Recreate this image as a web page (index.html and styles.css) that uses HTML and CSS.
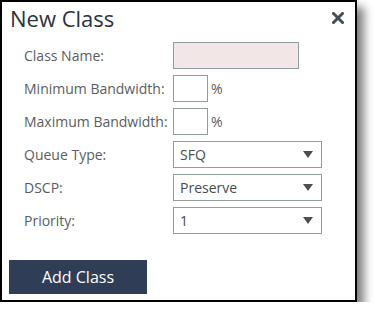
FILE: index.html
```html
<!DOCTYPE html>
<html><head>
<title>New Class</title>
<link rel="stylesheet" href="styles.css">
</head><body>
<div class="dialog">
<div class="header">
<h3>New Class</h3>
<svg class="close" width="12" height="12" viewBox="0 0 12 12"><path d="M1.5 1.5 L10.5 10.5 M10.5 1.5 L1.5 10.5" stroke="#454d57" stroke-width="3" stroke-linecap="square"/></svg>
</div>
<div class="form">
<label>Class Name:</label>
<div class="field"><input type="text" class="name"></div>
<label>Minimum Bandwidth:</label>
<div class="field"><input type="text" class="pct"><span>%</span></div>
<label>Maximum Bandwidth:</label>
<div class="field"><input type="text" class="pct"><span>%</span></div>
<label>Queue Type:</label>
<div class="field"><div class="select">SFQ<i></i></div></div>
<label>DSCP:</label>
<div class="field"><div class="select">Preserve<i></i></div></div>
<label>Priority:</label>
<div class="field"><div class="select">1<i></i></div></div>
</div>
<button>Add Class</button>
</div>
</body></html>
```

FILE: styles.css
```css
body {margin: 0; background-color: #fff; font-family: "Open Sans", "Liberation Sans", sans-serif;}
.dialog {width: 353px; border: 2px solid #000; background-color: #fff; box-shadow: 7px 7px 9px rgba(0,0,0,0.5); padding: 0 0 6px 0;}
.header {height: 40px; display: flex; justify-content: space-between; align-items: flex-start; padding: 0 11px 0 8px;}
h3 {margin: 0; font-size: 22px; font-weight: normal; line-height: 32px; color: #2a3340;}
.close {margin-top: 10px;}
.form {display: grid; grid-template-columns: 149px 1fr; grid-auto-rows: 27px; row-gap: 6px; padding-left: 22px;}
label {font-size: 14px; color: #595d61; display: flex; align-items: center;}
.field {display: flex; align-items: center;}
.field span {font-size: 14px; color: #595d61; margin-left: 3px;}
input {box-sizing: border-box; height: 27px; border: 1px solid #8f9d9c; margin: 0; padding: 0; background: #fff;}
.name {width: 126px; background-color: #f3e6e6;}
.pct {width: 35px;}
.select {box-sizing: border-box; width: 149px; height: 27px; border: 1px solid #8f9d9c; display: flex; align-items: center; justify-content: space-between; padding: 0 8px 0 6px; font-size: 14px; color: #474b50;}
.select i {width: 0; height: 0; border-left: 5px solid transparent; border-right: 5px solid transparent; border-top: 7px solid #4c4f52;}
button {display: block; margin: 26px 0 0 7px; width: 138px; height: 34px; border: none; background-color: #2f3d56; color: #fff; font-family: "Open Sans", "Liberation Sans", sans-serif; font-size: 16px; padding: 0;}
```
